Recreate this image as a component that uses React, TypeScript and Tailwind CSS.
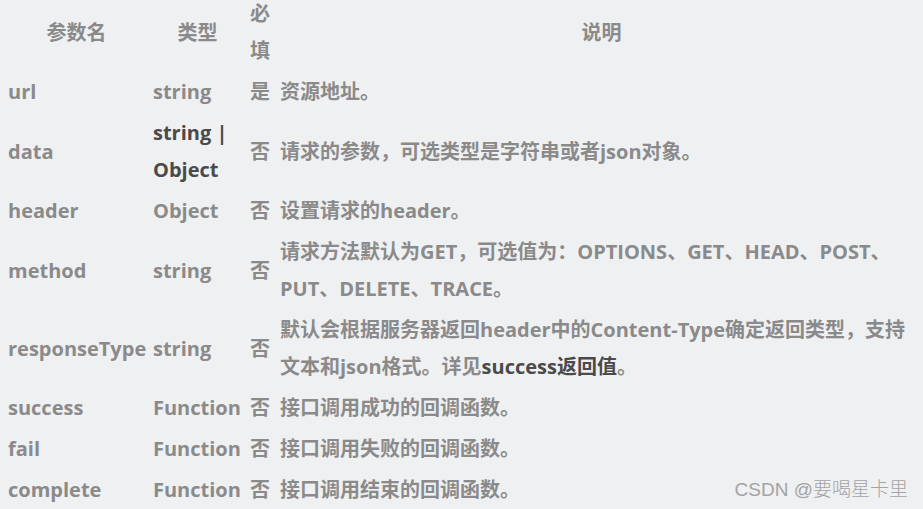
const rows: { name: string; type: React.ReactNode; req: string; desc: React.ReactNode }[] = [
  { name: "url", type: "string", req: "是", desc: "资源地址。" },
  {
    name: "data",
    type: (
      <span className="text-[#4a4a4a]">
        string |<br />
        Object
      </span>
    ),
    req: "否",
    desc: "请求的参数，可选类型是字符串或者json对象。",
  },
  { name: "header", type: "Object", req: "否", desc: "设置请求的header。" },
  {
    name: "method",
    type: "string",
    req: "否",
    desc: (
      <>
        请求方法默认为GET，可选值为：OPTIONS、GET、HEAD、POST、
        <br />
        PUT、DELETE、TRACE。
      </>
    ),
  },
  {
    name: "responseType",
    type: "string",
    req: "否",
    desc: (
      <>
        默认会根据服务器返回header中的Content-Type确定返回类型，支持
        <br />
        文本和json格式。详见<span className="text-[#4a4a4a]">success返回值</span>。
      </>
    ),
  },
  { name: "success", type: "Function", req: "否", desc: "接口调用成功的回调函数。" },
  { name: "fail", type: "Function", req: "否", desc: "接口调用失败的回调函数。" },
  { name: "complete", type: "Function", req: "否", desc: "接口调用结束的回调函数。" },
];

export default function App() {
  return (
    <div
      className="relative w-[923px] h-[509px] overflow-hidden bg-[#eff0f2] text-[#8a8a8a]"
      style={{ fontFamily: '"Open Sans", "Noto Sans CJK SC", sans-serif' }}
    >
      <table className="-mt-[7px] w-[923px] table-fixed border-collapse text-[20px] font-bold leading-[37px]">
        <colgroup>
          <col className="w-[145px]" />
          <col className="w-[97px]" />
          <col className="w-[30px]" />
          <col />
        </colgroup>
        <thead>
          <tr>
            <th className="py-[2px] pl-2 text-center align-middle">参数名</th>
            <th className="py-[2px] pl-2 text-center align-middle">类型</th>
            <th className="py-[2px] pl-2 text-left align-middle">必填</th>
            <th className="py-[2px] pl-2 text-center align-middle">说明</th>
          </tr>
        </thead>
        <tbody>
          {rows.map((r) => (
            <tr key={r.name}>
              <td className="py-[2px] pl-2 align-middle whitespace-nowrap">{r.name}</td>
              <td className="py-[2px] pl-2 align-middle whitespace-nowrap">{r.type}</td>
              <td className="py-[2px] pl-2 align-middle">{r.req}</td>
              <td className="py-[2px] pl-2 align-middle whitespace-nowrap">{r.desc}</td>
            </tr>
          ))}
        </tbody>
      </table>
      {/* watermark */}
      <div
        className="absolute right-[15px] bottom-[5px] text-[19px] font-light text-[#a3a3a3]"
        style={{ fontFamily: '"Liberation Sans", "Noto Sans CJK SC", sans-serif' }}
      >
        CSDN @要喝星卡里
      </div>
    </div>
  );
}
